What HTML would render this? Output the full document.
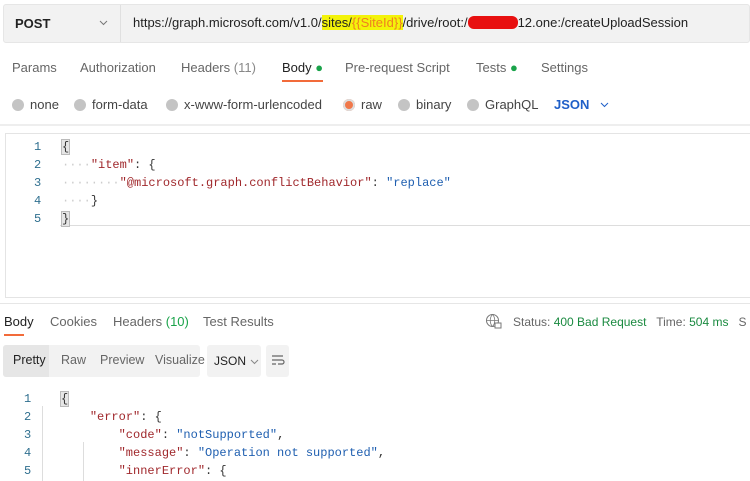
<!DOCTYPE html>
<html><head><style>
*{margin:0;padding:0;box-sizing:border-box}
body{width:750px;height:481px;background:#fff;font-family:"Liberation Sans",sans-serif;font-size:13px;color:#505050;position:relative;overflow:hidden}
.a{position:absolute;white-space:nowrap}
.mono{font-family:"Liberation Mono",monospace;font-size:12px}
.rd{display:inline-block;width:12px;height:12px;border-radius:50%;background:#c4c4c4;vertical-align:-2px;margin-right:6px}
.ln{color:#2f6f8f;font-family:"Liberation Mono",monospace;font-size:12px}
.k{color:#a0282c}.s{color:#1f5fb0}
</style></head><body>
<div class="a" style="left:3px;top:4px;width:747px;height:39px;background:#f2f2f2;border-radius:3px;border:1px solid #e6e6e6"></div>
<div class="a" style="left:120px;top:5px;width:1px;height:37px;background:#e0e0e0"></div>
<div class="a" style="left:15px;top:16px;font-weight:bold;color:#222;font-size:13px">POST</div>
<svg class="a" style="left:99px;top:20px" width="9" height="6"><path d="M1 1l3.5 3.5L8 1" stroke="#777" fill="none"/></svg>
<div class="a" style="left:133px;top:15px;color:#222;font-size:13px">https://graph.microsoft.com/v1.0/<span style="background:#f3f30a">sites/<span style="color:#f08020">{{SiteId}}</span></span>/drive/root:/<span style="display:inline-block;width:50px;height:13px;background:#e81010;border-radius:6px;vertical-align:-2px"></span>12.one:/createUploadSession</div>
<div class="a" style="left:12px;top:60px;color:#666">Params</div>
<div class="a" style="left:80px;top:60px;color:#666">Authorization</div>
<div class="a" style="left:181px;top:60px;color:#666">Headers <span style="color:#888">(11)</span></div>
<div class="a" style="left:282px;top:60px;color:#222">Body <span style="color:#1aa34a">●</span></div>
<div class="a" style="left:282px;top:80px;width:41px;height:2px;background:#f26b3a"></div>
<div class="a" style="left:345px;top:60px;color:#666">Pre-request Script</div>
<div class="a" style="left:476px;top:60px;color:#666">Tests <span style="color:#1aa34a">●</span></div>
<div class="a" style="left:541px;top:60px;color:#666">Settings</div>
<div class="a" style="left:12px;top:97px;color:#444"><span class="rd"></span>none</div>
<div class="a" style="left:74px;top:97px;color:#444"><span class="rd"></span>form-data</div>
<div class="a" style="left:166px;top:97px;color:#444"><span class="rd"></span>x-www-form-urlencoded</div>
<div class="a" style="left:343px;top:97px;color:#444"><span class="rd" style="background:#f0784a;box-shadow:inset 0 0 0 2px #ddd"></span>raw</div>
<div class="a" style="left:398px;top:97px;color:#444"><span class="rd"></span>binary</div>
<div class="a" style="left:467px;top:97px;color:#444"><span class="rd"></span>GraphQL</div>
<div class="a" style="left:554px;top:97px;color:#1f5fc8;font-weight:bold">JSON</div>
<svg class="a" style="left:600px;top:102px" width="9" height="6"><path d="M1 1l3.5 3.5L8 1" stroke="#1f5fc8" fill="none"/></svg>
<div class="a" style="left:0;top:124px;width:750px;height:2px;background:#eee"></div>
<div class="a" style="left:5px;top:133px;width:745px;height:165px;border:1px solid #e4e4e4;border-right:none"></div>
<div class="a" style="left:60px;top:225px;width:690px;height:1px;background:#ddd"></div>
<div class="a ln" style="left:34px;top:138px;line-height:18px">1<br>2<br>3<br>4<br>5</div>
<div class="a mono" style="left:62px;top:138px;line-height:18px;color:#333"><span style="background:#e6e6e6;outline:1px solid #bbb">{</span><br><span style="color:#ccc">····</span><span class="k">"item"</span>: {<br><span style="color:#ccc">········</span><span class="k">"@microsoft.graph.conflictBehavior"</span>: <span class="s">"replace"</span><br><span style="color:#ccc">····</span>}<br><span style="background:#e6e6e6;outline:1px solid #bbb">}</span></div>
<div class="a" style="left:0;top:303px;width:750px;height:1px;background:#e6e6e6"></div>
<div class="a" style="left:4px;top:314px;color:#222">Body</div>
<div class="a" style="left:4px;top:334px;width:20px;height:2px;background:#f26b3a"></div>
<div class="a" style="left:50px;top:314px;color:#666">Cookies</div>
<div class="a" style="left:113px;top:314px;color:#666">Headers <span style="color:#1aa34a">(10)</span></div>
<div class="a" style="left:203px;top:314px;color:#666">Test Results</div>
<svg class="a" style="left:485px;top:313px" width="17" height="17"><circle cx="7.5" cy="7.5" r="6" fill="none" stroke="#777"/><path d="M1.5 7.5h12M7.5 1.5c-3 3-3 9 0 12M7.5 1.5c3 3 3 9 0 12" fill="none" stroke="#777" stroke-width=".8"/><rect x="10" y="10" width="6" height="5" fill="#fff" stroke="#777"/></svg>
<div class="a" style="left:513px;top:315px;color:#666;font-size:12px">Status: <span style="color:#1a8a40">400 Bad Request</span> &nbsp; Time: <span style="color:#1a8a40">504 ms</span> &nbsp; S</div>
<div class="a" style="left:3px;top:345px;width:197px;height:32px;background:#f2f2f2;border-radius:3px"></div>
<div class="a" style="left:3px;top:345px;width:46px;height:32px;background:#e6e6e6;border-radius:3px 0 0 3px"></div>
<div class="a" style="left:13px;top:353px;color:#222;font-size:12.5px">Pretty</div>
<div class="a" style="left:61px;top:353px;color:#666;font-size:12.5px">Raw</div>
<div class="a" style="left:100px;top:353px;color:#666;font-size:12.5px">Preview</div>
<div class="a" style="left:155px;top:353px;color:#666;font-size:12.5px">Visualize</div>
<div class="a" style="left:207px;top:345px;width:54px;height:32px;background:#f2f2f2;border-radius:3px"></div>
<div class="a" style="left:214px;top:354px;color:#222;font-size:12px">JSON</div>
<svg class="a" style="left:250px;top:359px" width="9" height="6"><path d="M1 1l3.5 3.5L8 1" stroke="#888" fill="none"/></svg>
<div class="a" style="left:266px;top:345px;width:23px;height:32px;background:#f2f2f2;border-radius:3px"></div>
<svg class="a" style="left:271px;top:354px" width="14" height="12"><path d="M1 2h11M1 6h10a2 2 0 0 1 0 4H7M1 10h4" stroke="#666" fill="none" stroke-width="1.2"/></svg>
<div class="a ln" style="left:24px;top:390px;line-height:18px">1<br>2<br>3<br>4<br>5</div>
<div class="a" style="left:42px;top:406px;width:1px;height:75px;background:#ddd"></div>
<div class="a" style="left:83px;top:442px;width:1px;height:39px;background:#ddd"></div>
<div class="a mono" style="left:61px;top:390px;line-height:18px;color:#333;font-size:12px"><span style="background:#e6e6e6;outline:1px solid #bbb">{</span><br>&nbsp;&nbsp;&nbsp;&nbsp;<span class="k">"error"</span>: {<br>&nbsp;&nbsp;&nbsp;&nbsp;&nbsp;&nbsp;&nbsp;&nbsp;<span class="k">"code"</span>: <span class="s">"notSupported"</span>,<br>&nbsp;&nbsp;&nbsp;&nbsp;&nbsp;&nbsp;&nbsp;&nbsp;<span class="k">"message"</span>: <span class="s">"Operation not supported"</span>,<br>&nbsp;&nbsp;&nbsp;&nbsp;&nbsp;&nbsp;&nbsp;&nbsp;<span class="k">"innerError"</span>: {</div>
</body></html>
